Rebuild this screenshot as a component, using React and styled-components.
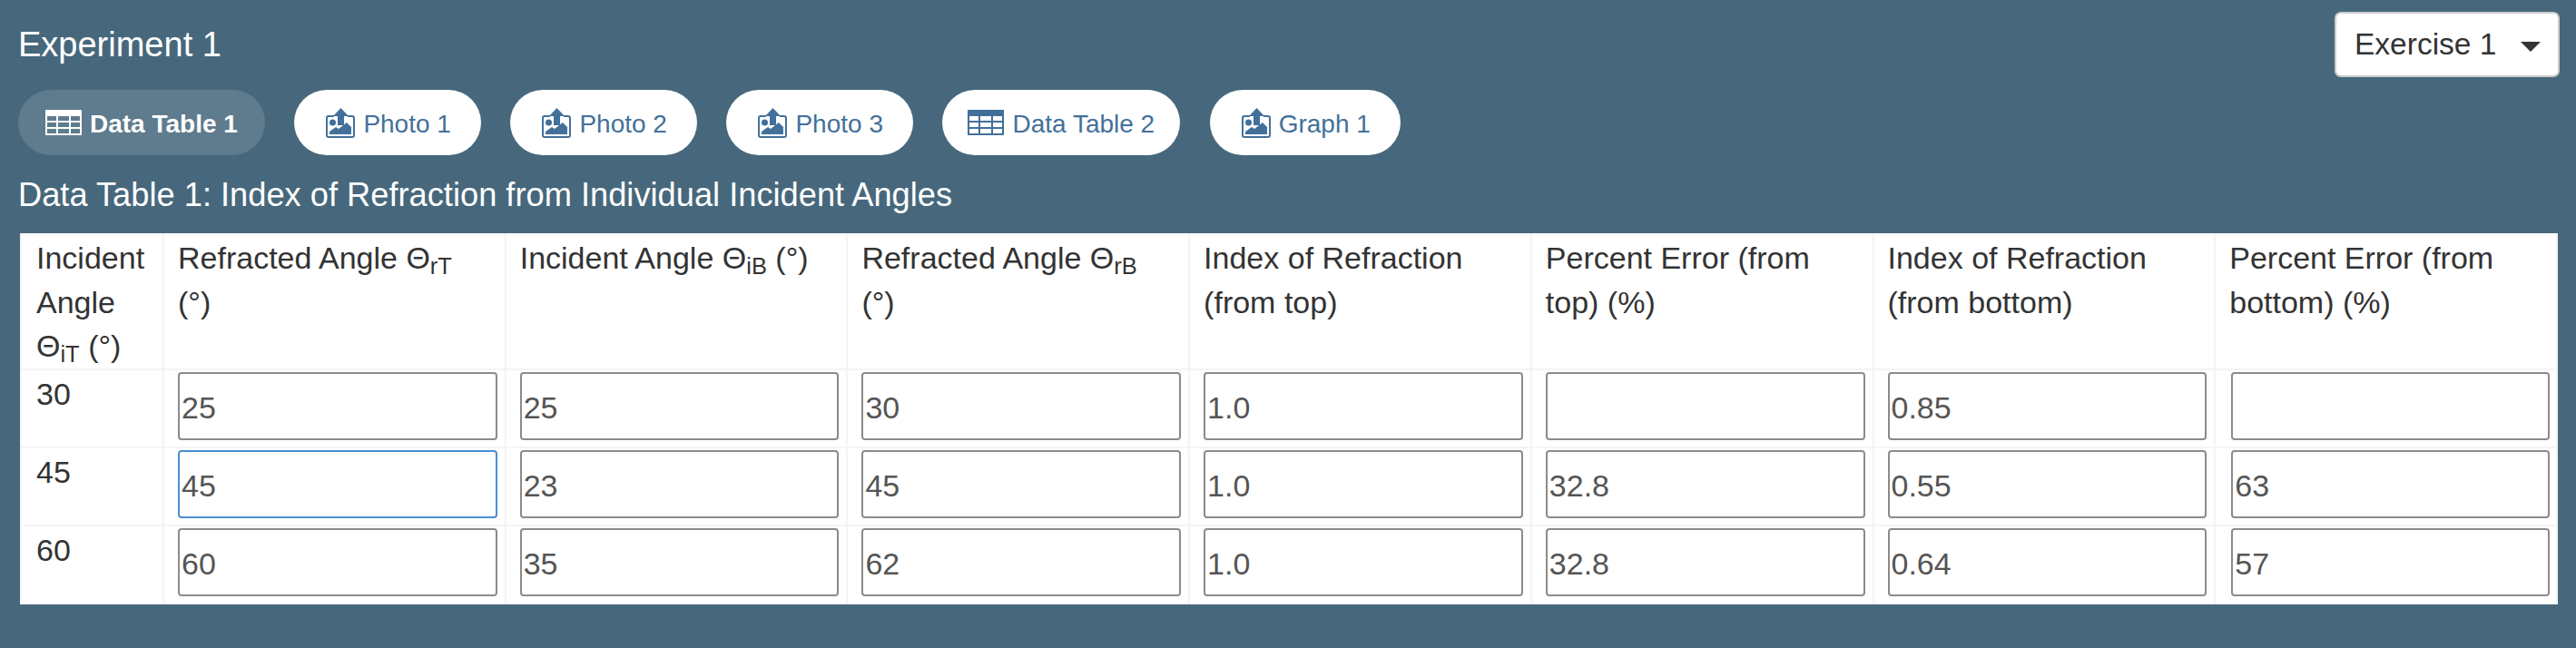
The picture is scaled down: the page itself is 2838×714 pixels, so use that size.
import styled, { createGlobalStyle } from 'styled-components';

const tabs = [
  { label: 'Data Table 1', icon: 'table', active: true },
  { label: 'Photo 1', icon: 'photo' },
  { label: 'Photo 2', icon: 'photo' },
  { label: 'Photo 3', icon: 'photo' },
  { label: 'Data Table 2', icon: 'table' },
  { label: 'Graph 1', icon: 'photo' },
];

const rows = [
  { angle: '30', values: ['25', '25', '30', '1.0', '', '0.85', ''] },
  { angle: '45', values: ['45', '23', '45', '1.0', '32.8', '0.55', '63'], focused: 0 },
  { angle: '60', values: ['60', '35', '62', '1.0', '32.8', '0.64', '57'] },
];

const tabPadding = ({ $icon, $active }) => {
  if ($active) return '0 30px';
  return $icon === 'table' ? '0 28px' : '0 33px 0 35px';
};

const TableIcon = () => (
  <IconSvg width="40" height="28" viewBox="0 0 40 28">
    <path
      fill="currentColor"
      fillRule="evenodd"
      d="M0 0h40v28H0zM2 7v5h10V7zM14 7v5h12V7zM28 7v5h10V7zM2 14v5h10v-5zM14 14v5h12v-5zM28 14v5h10v-5zM2 21v5h10v-5zM14 21v5h12v-5zM28 21v5h10v-5z"
    />
  </IconSvg>
);

const PhotoIcon = () => (
  <IconSvg width="32" height="33" viewBox="0 0 32 33">
    <path
      fill="none"
      stroke="currentColor"
      strokeWidth="2"
      d="M9 9H3a2 2 0 0 0-2 2v19a2 2 0 0 0 2 2h26a2 2 0 0 0 2-2V11a2 2 0 0 0-2-2h-5"
    />
    <path fill="currentColor" d="M16.5 0L25 9h-5v10h-7V9H8z" />
    <circle fill="currentColor" cx="7.5" cy="16" r="3.5" />
    <path fill="currentColor" d="M4 29v-3l7-5 3 2 9-7 5 5v8z" />
  </IconSvg>
);

const Theta = ({ sub }) => (
  <>
    Θ<sub>{sub}</sub>
  </>
);

const App = () => (
  <Page>
    <GlobalStyle />
    <TopBar>
      <Heading>Experiment 1</Heading>
      <ExerciseButton>
        Exercise 1
        <Caret />
      </ExerciseButton>
    </TopBar>
    <TabList>
      {tabs.map(({ label, icon, active }) => (
        <Tab key={label} $active={active} $icon={icon}>
          {icon === 'table' ? <TableIcon /> : <PhotoIcon />}
          <TabLabel>{label}</TabLabel>
        </Tab>
      ))}
    </TabList>
    <TableTitle>Data Table 1: Index of Refraction from Individual Incident Angles</TableTitle>
    <DataTable>
      <colgroup>
        <FirstCol />
      </colgroup>
      <thead>
        <tr>
          <HeadCell $first>
            Incident Angle <Theta sub="iT" /> (°)
          </HeadCell>
          <HeadCell>
            Refracted Angle <Theta sub="rT" /> (°)
          </HeadCell>
          <HeadCell>
            Incident Angle <Theta sub="iB" /> (°)
          </HeadCell>
          <HeadCell>
            Refracted Angle <Theta sub="rB" /> (°)
          </HeadCell>
          <HeadCell>Index of Refraction (from top)</HeadCell>
          <HeadCell>Percent Error (from top) (%)</HeadCell>
          <HeadCell>Index of Refraction (from bottom)</HeadCell>
          <HeadCell>Percent Error (from bottom) (%)</HeadCell>
        </tr>
      </thead>
      <tbody>
        {rows.map(({ angle, values, focused }) => (
          <tr key={angle}>
            <AngleCell>{angle}</AngleCell>
            {values.map((value, i) => (
              <InputCell key={i}>
                <ValueInput type="text" defaultValue={value} readOnly $focused={focused === i} />
              </InputCell>
            ))}
          </tr>
        ))}
      </tbody>
    </DataTable>
  </Page>
);

export default App;

const GlobalStyle = createGlobalStyle`
  html, body {
    margin: 0;
    padding: 0;
    background: #47687c;
  }
  * {
    box-sizing: border-box;
  }
`;

const Page = styled.div`
  width: 2838px;
  height: 714px;
  overflow: hidden;
  padding: 13px 18px 0 20px;
  background: #47687c;
  font-family: 'Liberation Sans', Arial, sans-serif;
  -webkit-font-smoothing: antialiased;
`;

const TopBar = styled.div`
  display: flex;
  align-items: center;
  justify-content: space-between;
  height: 72px;
`;

const Heading = styled.h1`
  margin: 0;
  font-size: 38px;
  font-weight: 400;
  color: #fff;
`;

const ExerciseButton = styled.button`
  display: flex;
  align-items: center;
  justify-content: space-between;
  width: 248px;
  height: 72px;
  padding: 0 19px 0 20px;
  background: #fff;
  border: 2px solid #ccc;
  border-radius: 7px;
  font-family: inherit;
  font-size: 33.5px;
  color: #333;
`;

const Caret = styled.span`
  width: 0;
  height: 0;
  margin-top: 5px;
  border-top: 11px solid #333;
  border-left: 11px solid transparent;
  border-right: 11px solid transparent;
`;

const TabList = styled.div`
  display: flex;
  gap: 32.5px;
  margin-top: 14px;
`;

const Tab = styled.button`
  display: flex;
  align-items: center;
  gap: 9px;
  height: 72px;
  padding: ${tabPadding};
  border: 0;
  border-radius: 36px;
  background: ${({ $active }) => ($active ? '#5f7b8e' : '#fff')};
  color: ${({ $active }) => ($active ? '#fff' : '#43709a')};
  font-family: inherit;
  font-size: 28px;
  font-weight: ${({ $active }) => ($active ? 700 : 400)};
`;

const TabLabel = styled.span`
  padding-top: 3px;
`;

const IconSvg = styled.svg`
  flex: none;
  display: block;
`;

const TableTitle = styled.h2`
  margin: 20px 0 0;
  font-size: 36.25px;
  line-height: 48px;
  font-weight: 400;
  color: #fff;
`;

const DataTable = styled.table`
  width: 2796px;
  margin: 18px 0 0 2px;
  table-layout: fixed;
  border-collapse: collapse;
  background: #fff;
  font-size: 34px;
  line-height: 48.5px;
  color: #333;

  sub {
    font-size: 75%;
    line-height: 0;
    position: relative;
    bottom: -0.25em;
    vertical-align: baseline;
  }
`;

const FirstCol = styled.col`
  width: 157px;
`;

const HeadCell = styled.th`
  padding: 3px 24px 0 ${({ $first }) => ($first ? 16 : 15)}px;
  border: 2px solid #f4f4f4;
  border-top: 0;
  vertical-align: top;
  text-align: left;
  font-weight: 400;
  &:first-child {
    padding-right: 4px;
  }
`;

const AngleCell = styled.td`
  padding: 2px 8px 0 16px;
  border: 2px solid #f4f4f4;
  vertical-align: top;
`;

const InputCell = styled.td`
  padding: 2px 8px 7px 15px;
  border: 2px solid #f4f4f4;
  vertical-align: top;
  &:last-child {
    padding: 2px 7px 7px 17px;
  }
`;

const ValueInput = styled.input`
  display: block;
  width: 100%;
  height: 75px;
  padding: 4px 2px 0;
  background: #fff;
  border: 2px solid ${({ $focused }) => ($focused ? '#4a90d2' : '#8b8b8b')};
  border-radius: 4px;
  outline: none;
  font-family: inherit;
  font-size: 34px;
  color: #555;
`;
